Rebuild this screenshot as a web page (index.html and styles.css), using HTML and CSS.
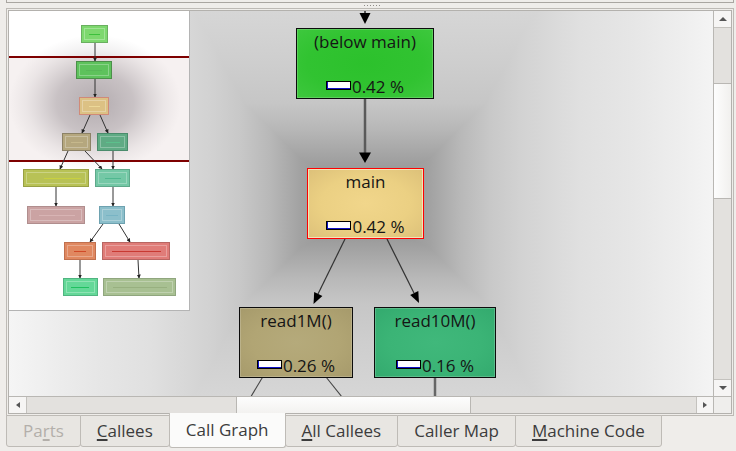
FILE: index.html
```html
<!DOCTYPE html>
<html>
<head>
<meta charset="utf-8">
<link rel="stylesheet" href="styles.css">
</head>
<body>
<div class="top-strip"></div>
<div class="splitter"><div class="grip"></div></div>
<div class="frame">
  <div class="view">
    <div class="canvas">
      <svg class="edges" width="704" height="385" viewBox="0 0 704 385">
        <line x1="356" y1="-2" x2="356" y2="4" stroke="#555" stroke-width="2"/>
        <polygon points="350.5,2 361.5,2 356,13" fill="#000"/>
        <line x1="356" y1="88" x2="356" y2="143" stroke="#5a5a5a" stroke-width="2.5"/>
        <polygon points="350,141.5 362,141.5 356,152" fill="#000"/>
        <line x1="336" y1="228" x2="309" y2="283" stroke="#333" stroke-width="1.2"/>
        <polygon points="304.5,293 313.4,285 305.2,281.1" fill="#000"/>
        <line x1="378" y1="228" x2="405" y2="282" stroke="#333" stroke-width="1.2"/>
        <polygon points="410,292 409.3,280.1 401.2,284.1" fill="#000"/>
        <line x1="253.7" y1="366" x2="241.7" y2="386" stroke="#444" stroke-width="1.1"/>
        <line x1="317" y1="366" x2="333" y2="386" stroke="#444" stroke-width="1.1"/>
        <line x1="426" y1="366" x2="426" y2="386" stroke="#666" stroke-width="2.5"/>
      </svg>

      <div class="node n-below">
        <div class="title">(below main)</div>
        <div class="cost"><span class="bar"></span><span>0.42 %</span></div>
      </div>
      <div class="node n-main">
        <div class="title">main</div>
        <div class="cost"><span class="bar"></span><span>0.42 %</span></div>
      </div>
      <div class="node n-read1">
        <div class="title">read1M()</div>
        <div class="cost"><span class="bar"></span><span>0.26 %</span></div>
      </div>
      <div class="node n-read10">
        <div class="title">read10M()</div>
        <div class="cost"><span class="bar"></span><span>0.16 %</span></div>
      </div>

      <div class="overview">
        <svg width="180" height="299" viewBox="0 0 180 299">
          <defs>
            <radialGradient id="shade" cx="0.5" cy="0.5" r="0.5">
              <stop offset="0" stop-color="#857c82" stop-opacity="0.6"/>
              <stop offset="0.45" stop-color="#8a8187" stop-opacity="0.42"/>
              <stop offset="0.8" stop-color="#9a9297" stop-opacity="0.12"/>
              <stop offset="1" stop-color="#a09a9d" stop-opacity="0"/>
            </radialGradient>
            <marker id="ah" markerWidth="4" markerHeight="4" refX="3.5" refY="2" orient="auto" markerUnits="userSpaceOnUse">
              <path d="M0,0 L4,2 L0,4 z" fill="#222"/>
            </marker>
          </defs>
          <rect x="0" y="47" width="180" height="102" fill="#f6f1f1"/>
          <ellipse cx="86" cy="92" rx="86" ry="68" fill="url(#shade)"/>
          <rect x="0" y="45" width="180" height="2" fill="#7e0000"/>
          <rect x="0" y="149" width="180" height="2" fill="#7e0000"/>

          <g stroke="#333" stroke-width="1" marker-end="url(#ah)">
            <line x1="86" y1="32" x2="86" y2="50"/>
            <line x1="86" y1="68" x2="86" y2="86"/>
            <line x1="81" y1="104" x2="73" y2="122"/>
            <line x1="91" y1="104" x2="99" y2="122"/>
            <line x1="59" y1="140" x2="51" y2="158"/>
            <line x1="76" y1="140" x2="93" y2="158"/>
            <line x1="104" y1="140" x2="104" y2="158"/>
            <line x1="47" y1="176" x2="47" y2="195"/>
            <line x1="104" y1="176" x2="104" y2="195"/>
            <line x1="94" y1="213" x2="81" y2="231"/>
            <line x1="110" y1="213" x2="121" y2="231"/>
            <line x1="71" y1="249" x2="71" y2="267"/>
            <line x1="129" y1="249" x2="130" y2="267"/>
          </g>

          <g class="ov-node">
            <rect x="72.5" y="14.5" width="26" height="17" fill="#7dd86e" stroke="#6aaf60"/>
            <rect x="75.5" y="17.5" width="20" height="11" class="inner"/>
            <line x1="80" y1="23.5" x2="91" y2="23.5" stroke="#3cc03c"/>
          </g>
          <g class="ov-node">
            <rect x="67.5" y="50.5" width="35" height="17" fill="#5ec25c" stroke="#4c8f4a"/>
            <rect x="70.5" y="53.5" width="29" height="11" class="inner"/>
            <line x1="77" y1="59.5" x2="93" y2="59.5" stroke="#58b858"/>
          </g>
          <g class="ov-node">
            <rect x="70.5" y="86.5" width="29" height="17" fill="#dcc184" stroke="#d08a78"/>
            <rect x="73.5" y="89.5" width="23" height="11" class="inner"/>
            <line x1="80" y1="95.5" x2="91" y2="95.5" stroke="#ecd898"/>
          </g>
          <g class="ov-node">
            <rect x="53.5" y="122.5" width="28" height="17" fill="#b5a77e" stroke="#8c8266"/>
            <rect x="56.5" y="125.5" width="22" height="11" class="inner"/>
            <line x1="62" y1="131.5" x2="74" y2="131.5" stroke="#c6b88c"/>
          </g>
          <g class="ov-node">
            <rect x="88.5" y="122.5" width="30" height="17" fill="#5fab84" stroke="#4a8c6c"/>
            <rect x="91.5" y="125.5" width="24" height="11" class="inner"/>
            <line x1="97" y1="131.5" x2="111" y2="131.5" stroke="#5cc08c"/>
          </g>
          <g class="ov-node">
            <rect x="14.5" y="158.5" width="65" height="17" fill="#b8c256" stroke="#98a044"/>
            <rect x="17.5" y="161.5" width="59" height="11" class="inner"/>
            <line x1="35" y1="167.5" x2="72" y2="167.5" stroke="#c8d040"/>
          </g>
          <g class="ov-node">
            <rect x="86.5" y="158.5" width="34" height="17" fill="#74c8a6" stroke="#5ea88a"/>
            <rect x="89.5" y="161.5" width="28" height="11" class="inner"/>
            <line x1="96" y1="167.5" x2="112" y2="167.5" stroke="#50b890"/>
          </g>
          <g class="ov-node">
            <rect x="18.5" y="195.5" width="57" height="17" fill="#cba3a3" stroke="#b08e8e"/>
            <rect x="21.5" y="198.5" width="51" height="11" class="inner"/>
            <line x1="30" y1="204.5" x2="66" y2="204.5" stroke="#d8b4b4"/>
          </g>
          <g class="ov-node">
            <rect x="90.5" y="195.5" width="25" height="17" fill="#8cbfcb" stroke="#6ea2b0"/>
            <rect x="93.5" y="198.5" width="19" height="11" class="inner"/>
            <line x1="97" y1="204.5" x2="109" y2="204.5" stroke="#78b4c4"/>
          </g>
          <g class="ov-node">
            <rect x="55.5" y="231.5" width="31" height="17" fill="#e08860" stroke="#c0704e"/>
            <rect x="58.5" y="234.5" width="25" height="11" class="inner"/>
            <line x1="65" y1="240.5" x2="77" y2="240.5" stroke="#d04a28"/>
          </g>
          <g class="ov-node">
            <rect x="93.5" y="231.5" width="67" height="17" fill="#e07c78" stroke="#b86662"/>
            <rect x="96.5" y="234.5" width="61" height="11" class="inner"/>
            <line x1="103" y1="240.5" x2="152" y2="240.5" stroke="#c83a32"/>
          </g>
          <g class="ov-node">
            <rect x="54.5" y="267.5" width="34" height="17" fill="#64d898" stroke="#50b480"/>
            <rect x="57.5" y="270.5" width="28" height="11" class="inner"/>
            <line x1="62" y1="276.5" x2="80" y2="276.5" stroke="#20c060"/>
          </g>
          <g class="ov-node">
            <rect x="94.5" y="267.5" width="72" height="17" fill="#a8c092" stroke="#90a67e"/>
            <rect x="97.5" y="270.5" width="66" height="11" class="inner"/>
            <line x1="104" y1="276.5" x2="158" y2="276.5" stroke="#98b080"/>
          </g>
        </svg>
      </div>
    </div>

    <div class="vscroll">
      <div class="sbtn up"><span class="tri-up"></span></div>
      <div class="vtrough-a"></div>
      <div class="vhandle"></div>
      <div class="vtrough-b"></div>
      <div class="sbtn down"><span class="tri-down"></span></div>
    </div>

    <div class="hscroll">
      <div class="hbtn left"><span class="tri-left"></span></div>
      <div class="htrough-a"></div>
      <div class="hhandle"></div>
      <div class="htrough-b"></div>
      <div class="hbtn right"><span class="tri-right"></span></div>
    </div>
    <div class="corner"></div>
  </div>
</div>

<div class="tabs">
  <div class="tab disabled">Pa<u>r</u>ts</div>
  <div class="tab"><u>C</u>allees</div>
  <div class="tab active">Call Graph</div>
  <div class="tab"><u>A</u>ll Callees</div>
  <div class="tab">Caller Map</div>
  <div class="tab"><u>M</u>achine Code</div>
</div>
</body>
</html>
```

FILE: styles.css
```css
html, body {
  margin: 0;
  padding: 0;
}
body {
  background: #efedea;
  font-family: "Open Sans", "Noto Sans", sans-serif;
  width: 736px;
  height: 451px;
  overflow: hidden;
}

.top-strip {
  height: 2px;
  margin: 0 2px 0 6px;
  border: 1px solid #a9a6a1;
  border-top: none;
}

.splitter {
  height: 5px;
  padding: 2px 0 0 364px;
  box-sizing: border-box;
}
.grip {
  width: 18px;
  height: 1px;
  background: repeating-linear-gradient(to right, #8f8c88 0 1px, transparent 1px 3px);
}

.frame {
  margin: 0 2px 0 6px;
  border: 1px solid #bdbab5;
  padding: 1px;
}
.view {
  border: 1px solid #b3b1ad;
  display: grid;
  grid-template-columns: 704px 18px;
  grid-template-rows: 385px 17px;
}

.canvas {
  position: relative;
  overflow: hidden;
  background-color: #000;
  background-image:
    linear-gradient(to right, #f5f5f5 0px, #eeeeee 41px, #e6e6e6 91px, #e0e0e0 141px, #d2d2d2 201px, #c8c8c8 231px, #b8b8b8 261px, #a2a2a2 291px, #939393 335px, #939393 377px, #a2a2a2 421px, #b8b8b8 451px, #c8c8c8 481px, #d2d2d2 511px, #e0e0e0 571px, #e6e6e6 621px, #eeeeee 671px, #f4f4f4 704px),
    linear-gradient(to bottom, #d6d6d6 0px, #cecece 52px, #c6c6c6 92px, #b8b8b8 117px, #a2a2a2 147px, #939393 168px, #939393 216px, #a2a2a2 237px, #b8b8b8 267px, #c6c6c6 292px, #cecece 332px, #d6d6d6 385px);
  background-blend-mode: lighten;
}

.edges {
  position: absolute;
  left: 0;
  top: 0;
}

.node {
  position: absolute;
  box-sizing: border-box;
  border: 1px solid #0c0c0c;
  display: flex;
  flex-direction: column;
  align-items: center;
  justify-content: space-between;
  padding: 3px 0 1px;
  font-size: 17px;
  line-height: 20px;
  color: #151515;
  box-shadow: inset 0 0 0 1px rgba(255, 255, 255, 0.18);
}
.title {
  white-space: nowrap;
}
.cost {
  display: flex;
  align-items: center;
  gap: 1px;
  white-space: nowrap;
}
.bar {
  width: 25px;
  height: 9px;
  box-sizing: border-box;
  border: 1px solid #000;
  background: #fff;
  box-shadow: inset 1px -1px 0 #1010c8;
  margin-bottom: 3px;
}

.n-below {
  left: 287px;
  top: 17px;
  width: 138px;
  height: 71px;
  background: radial-gradient(ellipse at 50% 50%, #2cc12c 0%, #31c331 60%, #3ec83e 100%);
}
.n-main {
  left: 298px;
  top: 157px;
  width: 117px;
  height: 71px;
  border-color: #ff0000;
  box-shadow: inset 0 0 0 1px rgba(255, 255, 240, 0.55);
  background: radial-gradient(ellipse at 50% 50%, #f1d68b 0%, #ebd083 55%, #dcc079 100%);
}
.n-read1 {
  left: 230px;
  top: 296px;
  width: 114px;
  height: 71px;
  background: radial-gradient(ellipse at 50% 50%, #b5aa7b 0%, #b1a574 55%, #a69a6b 100%);
}
.n-read10 {
  left: 365px;
  top: 296px;
  width: 122px;
  height: 71px;
  background: radial-gradient(ellipse at 50% 50%, #40b87b 0%, #3bb476 55%, #33aa6e 100%);
}

.overview {
  position: absolute;
  left: 0;
  top: 0;
  width: 181px;
  height: 300px;
  box-sizing: border-box;
  background: #fff;
  border-right: 1px solid #b4b4b4;
  border-bottom: 1px solid #b4b4b4;
}
.overview svg {
  display: block;
}
.ov-node .inner {
  fill: none;
  stroke: #ffffff;
  stroke-opacity: 0.28;
}

/* vertical scrollbar */
.vscroll {
  border-left: 1px solid #b9b7b3;
  background: #e3e1de;
  display: flex;
  flex-direction: column;
}
.sbtn {
  height: 17px;
  box-sizing: border-box;
  background: #f6f5f4;
  display: flex;
  align-items: center;
  justify-content: center;
}
.sbtn.up {
  border-bottom: 1px solid #c4c2be;
}
.sbtn.down {
  border-top: 1px solid #c4c2be;
}
.vtrough-a {
  height: 55px;
}
.vhandle {
  height: 116px;
  box-sizing: border-box;
  border-top: 1px solid #b9b7b3;
  border-bottom: 1px solid #b9b7b3;
  background: linear-gradient(to right, #fdfdfd, #f1f0ee);
}
.vtrough-b {
  flex: 1;
}

/* horizontal scrollbar */
.hscroll {
  border-top: 1px solid #b9b7b3;
  background: #e3e1de;
  display: flex;
  box-sizing: border-box;
}
.hbtn {
  background: #f6f5f4;
  display: flex;
  align-items: center;
  justify-content: center;
  box-sizing: border-box;
}
.hbtn.left {
  width: 18px;
  border-right: 1px solid #c4c2be;
}
.hbtn.right {
  width: 17px;
  border-left: 1px solid #c4c2be;
}
.htrough-a {
  width: 209px;
}
.hhandle {
  width: 235px;
  box-sizing: border-box;
  border-left: 1px solid #b9b7b3;
  border-right: 1px solid #b9b7b3;
  background: linear-gradient(to bottom, #fdfdfd, #f3f2f0);
}
.htrough-b {
  flex: 1;
}
.corner {
  background: #efeeec;
  border-top: 1px solid #b9b7b3;
  border-left: 1px solid #b9b7b3;
}

.tri-up {
  width: 0;
  height: 0;
  border-left: 4px solid transparent;
  border-right: 4px solid transparent;
  border-bottom: 4px solid #555;
}
.tri-down {
  width: 0;
  height: 0;
  border-left: 4px solid transparent;
  border-right: 4px solid transparent;
  border-top: 4px solid #555;
}
.tri-left {
  width: 0;
  height: 0;
  border-top: 3px solid transparent;
  border-bottom: 3px solid transparent;
  border-right: 4px solid #555;
}
.tri-right {
  width: 0;
  height: 0;
  border-top: 3px solid transparent;
  border-bottom: 3px solid transparent;
  border-left: 4px solid #555;
}

/* tabs */
.tabs {
  display: flex;
  align-items: flex-start;
  margin: -1px 0 0 6px;
}
.tab {
  height: 32px;
  box-sizing: border-box;
  padding: 0 16px;
  border: 1px solid #bebbb6;
  border-radius: 0 0 3px 3px;
  background: #e8e6e2;
  font-size: 17px;
  line-height: 29px;
  color: #3c3c3c;
  margin-left: -1px;
  white-space: nowrap;
}
.tab:first-child {
  margin-left: 0;
}
.tab u {
  text-decoration-thickness: 2px;
  text-underline-offset: 2px;
}
.tab.disabled {
  color: #b3afaa;
}
.tab.active {
  background: #fbfbfa;
  height: 35px;
  margin-top: -2px;
  border-top: none;
  line-height: 34px;
  position: relative;
  z-index: 1;
}
```
